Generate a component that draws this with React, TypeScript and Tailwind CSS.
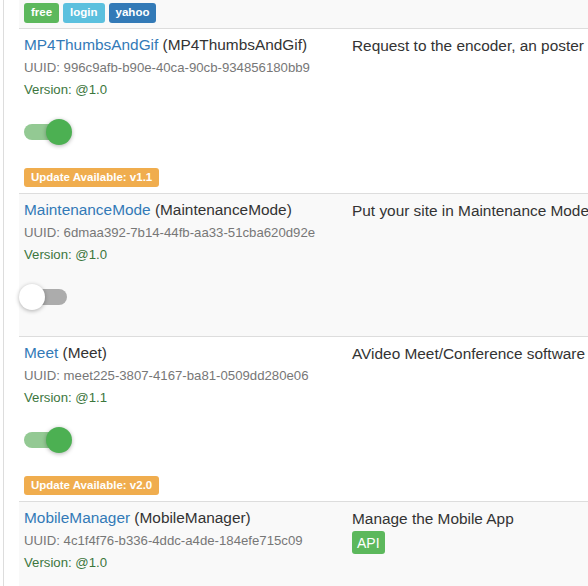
import React from 'react';

type Plugin = {
  name: string;
  uuid: string;
  version: string;
  enabled: boolean;
  update?: string;
  description: string;
  tags?: string[];
  striped: boolean;
  toggle?: boolean;
};

const plugins: Plugin[] = [
  {
    name: 'MP4ThumbsAndGif',
    uuid: '996c9afb-b90e-40ca-90cb-934856180bb9',
    version: '1.0',
    enabled: true,
    update: 'v1.1',
    description: 'Request to the encoder, an poster',
    striped: false,
    toggle: true,
  },
  {
    name: 'MaintenanceMode',
    uuid: '6dmaa392-7b14-44fb-aa33-51cba620d92e',
    version: '1.0',
    enabled: false,
    description: 'Put your site in Maintenance Mode',
    striped: true,
    toggle: true,
  },
  {
    name: 'Meet',
    uuid: 'meet225-3807-4167-ba81-0509dd280e06',
    version: '1.1',
    enabled: true,
    update: 'v2.0',
    description: 'AVideo Meet/Conference software',
    striped: false,
    toggle: true,
  },
  {
    name: 'MobileManager',
    uuid: '4c1f4f76-b336-4ddc-a4de-184efe715c09',
    version: '1.0',
    enabled: true,
    description: 'Manage the Mobile App',
    tags: ['API'],
    striped: true,
    toggle: false,
  },
];

const Toggle = ({ on }: { on: boolean }) => (
  <div className="relative h-[26px] w-[53px]">
    <div
      className={`absolute left-[5px] top-[5px] h-[16px] w-[43px] rounded-full ${
        on ? 'bg-[#93c993]' : 'bg-[#acacac]'
      }`}
    />
    <div
      className={`absolute top-0 h-[26px] w-[26px] rounded-full shadow-[0_1px_4px_rgba(0,0,0,0.3)] ${
        on ? 'left-[27px] bg-[#4cb052]' : 'left-0 bg-white'
      }`}
    />
  </div>
);

const Label = ({ text, color, h }: { text: string; color: string; h: string }) => (
  <span
    className={`inline-flex items-center rounded-[3px] px-[7px] text-[11.5px] font-bold leading-none text-white ${color} ${h}`}
  >
    {text}
  </span>
);

const Row = ({ p }: { p: Plugin }) => (
  <div className={`flex border-t border-[#dddddd] ${p.striped ? 'bg-[#f9f9f9]' : 'bg-white'}`}>
    <div className={`w-[328px] shrink-0 px-[5px] pt-[5px] ${p.update ? 'pb-[6px]' : 'pb-[26px]'}`}>
      <div className="h-[22px] text-[15.4px] leading-[22px] text-[#333]">
        <span className="text-[#337ab7]">{p.name}</span> ({p.name})
      </div>
      <div className="mt-[2px] h-[20px] text-[13.2px] leading-[20px] text-[#777]">UUID: {p.uuid}</div>
      <div className="mt-[2px] h-[20px] text-[13.2px] leading-[20px] text-[#3c763d]">
        Version: @{p.version}
      </div>
      {p.toggle && (
        <div className="mt-[19px] ml-[-5px]">
          <Toggle on={p.enabled} />
        </div>
      )}
      {p.update && (
        <div className="mt-[23px] flex">
          <Label text={`Update Available: ${p.update}`} color="bg-[#f0ad4e]" h="h-[19px]" />
        </div>
      )}
    </div>
    <div className="flex-1 whitespace-nowrap px-[5px] pt-[6px] text-[15.4px] leading-[22px] text-[#333]">
      <div>{p.description}</div>
      {p.tags && (
        <div className="mt-[1px] flex">
          {p.tags.map((t) => (
            <span
              key={t}
              className="inline-flex h-[23px] items-center rounded-[3px] bg-[#5cb85c] px-[5px] text-[14px] text-white"
            >
              {t}
            </span>
          ))}
        </div>
      )}
    </div>
  </div>
);

export default function App() {
  return (
    <div
      className="h-[586px] w-[588px] overflow-hidden bg-white"
      style={{ fontFamily: '"Liberation Sans", Arial, Helvetica, sans-serif' }}
    >
      <div className="ml-[3px] h-full border-l border-[#dddddd] pl-[15px]">
        <div className="w-[760px]">
          <div className="flex h-[28px] gap-[4px] bg-[#f9f9f9] pl-[5px] pt-[3px]">
            <Label text="free" color="bg-[#5cb85c]" h="h-[20px]" />
            <Label text="login" color="bg-[#5bc0de]" h="h-[20px]" />
            <Label text="yahoo" color="bg-[#337ab7]" h="h-[20px]" />
          </div>
          {plugins.map((p) => (
            <Row key={p.uuid} p={p} />
          ))}
        </div>
      </div>
    </div>
  );
}
